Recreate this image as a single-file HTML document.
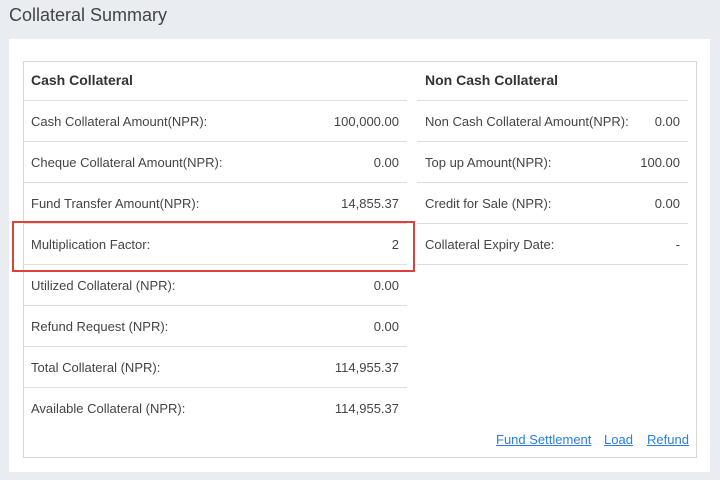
<!DOCTYPE html>
<html><head><style>
body{margin:0;width:720px;height:480px;background:#e9ecf1;font-family:"Liberation Sans",sans-serif;position:relative;overflow:hidden}
.t{position:absolute;left:9px;top:5px;font-size:18px;color:#444}
.card{position:absolute;left:9px;top:39px;width:701px;height:433px;background:#fff}
.box{position:absolute;left:23px;top:61px;width:672px;height:395px;border:1px solid #d6d6d6}
.h{position:absolute;font-weight:bold;font-size:14px;color:#333}
.r{position:absolute;height:40px;border-top:1px solid #ddd;font-size:13px;color:#444}
.r span{position:absolute;top:13px}
.r .v{right:8px}
.r .l{left:8px}
.red{position:absolute;left:12px;top:221px;width:399px;height:47px;border:2px solid #e0403a}
.links{position:absolute;top:432px;font-size:13px;color:#2a7de1;text-decoration:underline}
</style></head><body>
<div class="t">Collateral Summary</div>
<div class="card"></div>
<div class="box"></div>
<div class="h" style="left:31px;top:72px">Cash Collateral</div>
<div class="h" style="left:425px;top:72px">Non Cash Collateral</div>
<div class="r" style="left:23px;top:100px;width:384px"><span class="l">Cash Collateral Amount(NPR):</span><span class="v">100,000.00</span></div>
<div class="r" style="left:23px;top:141px;width:384px"><span class="l">Cheque Collateral Amount(NPR):</span><span class="v">0.00</span></div>
<div class="r" style="left:23px;top:182px;width:384px"><span class="l">Fund Transfer Amount(NPR):</span><span class="v">14,855.37</span></div>
<div class="r" style="left:23px;top:223px;width:384px"><span class="l">Multiplication Factor:</span><span class="v">2</span></div>
<div class="r" style="left:23px;top:264px;width:384px"><span class="l">Utilized Collateral (NPR):</span><span class="v">0.00</span></div>
<div class="r" style="left:23px;top:305px;width:384px"><span class="l">Refund Request (NPR):</span><span class="v">0.00</span></div>
<div class="r" style="left:23px;top:346px;width:384px"><span class="l">Total Collateral (NPR):</span><span class="v">114,955.37</span></div>
<div class="r" style="left:23px;top:387px;width:384px"><span class="l">Available Collateral (NPR):</span><span class="v">114,955.37</span></div>
<div class="r" style="left:417px;top:100px;width:271px"><span class="l">Non Cash Collateral Amount(NPR):</span><span class="v">0.00</span></div>
<div class="r" style="left:417px;top:141px;width:271px"><span class="l">Top up Amount(NPR):</span><span class="v">100.00</span></div>
<div class="r" style="left:417px;top:182px;width:271px"><span class="l">Credit for Sale (NPR):</span><span class="v">0.00</span></div>
<div class="r" style="left:417px;top:223px;width:271px;border-bottom:1px solid #ddd"><span class="l">Collateral Expiry Date:</span><span class="v">-</span></div>
<div class="red"></div>
<div class="links" style="left:496px">Fund Settlement</div>
<div class="links" style="left:604px">Load</div>
<div class="links" style="left:647px">Refund</div>
</body></html>
